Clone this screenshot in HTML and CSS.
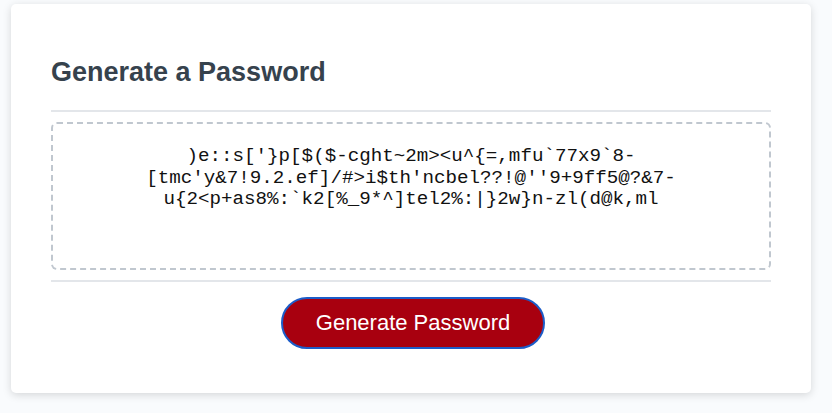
FILE: index.html
```html
<!DOCTYPE html>
<html lang="en">
<head>
<meta charset="UTF-8">
<title>Password Generator</title>
<link rel="stylesheet" href="styles.css">
</head>
<body>
<div class="wrapper">
  <div class="card">
    <div class="card-header">
      <h2 class="title">Generate a Password</h2>
    </div>
    <div class="card-body">
      <div class="password" role="textbox" aria-readonly="true">
        <span class="line">)e::s['}p[$($-cght~2m&gt;&lt;u^{=,mfu`77x9`8-</span>
        <span class="line">[tmc'y&amp;7!9.2.ef]/#&gt;i$th'ncbel??!@''9+9ff5@?&amp;7-</span>
        <span class="line">u{2&lt;p+as8%:`k2[%_9*^]tel2%:|}2w}n-zl(d@k,ml</span>
      </div>
    </div>
    <div class="card-footer">
      <button class="btn" type="button">Generate Password</button>
    </div>
  </div>
</div>
</body>
</html>
```
FILE: styles.css
```css
* {
  box-sizing: border-box;
}

html, body {
  margin: 0;
  padding: 0;
}

body {
  font-family: "Liberation Sans", Arial, Helvetica, sans-serif;
  background-color: #f9fbfd;
  height: 413px;
  overflow: hidden;
}

.wrapper {
  padding: 4px 21px 0 11px;
}

.card {
  width: 800px;
  background-color: #ffffff;
  border-radius: 5px;
  box-shadow: rgba(0, 0, 0, 0.15) 0 2px 8px 0;
  color: hsl(206, 17%, 28%);
  padding: 53px 40px 28px;
}

.title {
  margin: 0;
  font-size: 27px;
  line-height: 30px;
  font-weight: bold;
  color: #36424d;
}

.card-header::after,
.card-footer::before {
  content: "";
  display: block;
  height: 2px;
  background: #e3e6ea;
}

.card-header::after {
  margin-top: 23px;
}

.password {
  margin: 10px 0;
  height: 148px;
  border: 2px dashed #c0c7cf;
  border-radius: 6px;
  padding: 22px 15px 0;
  text-align: center;
  font-family: "Liberation Mono", "Courier New", monospace;
  font-size: 19.2px;
  line-height: 21.6px;
  color: #111111;
  overflow: hidden;
}

.line {
  display: block;
  white-space: pre;
}

.card-footer {
  text-align: center;
}

.btn {
  display: inline-block;
  margin: 15px 0 16px 4px;
  height: 52px;
  padding: 0 33px;
  border: 2px solid #1c5cc8;
  border-radius: 26px;
  background-color: #a8000f;
  color: #ffffff;
  font-family: "Liberation Sans", Arial, Helvetica, sans-serif;
  font-size: 22px;
  line-height: 22px;
  cursor: pointer;
}
```
